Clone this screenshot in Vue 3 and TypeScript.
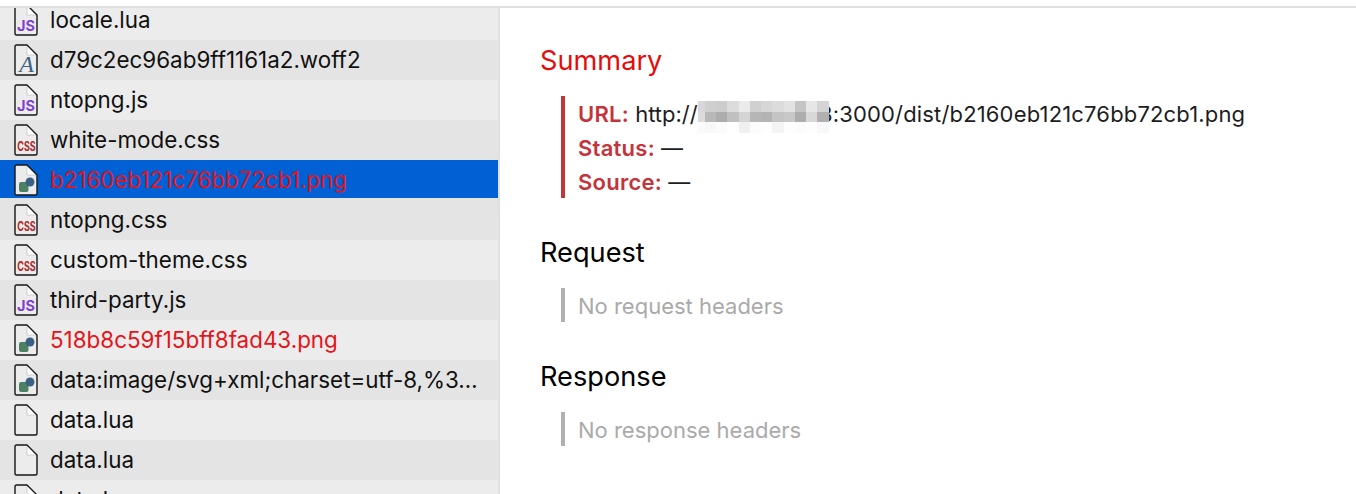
<script setup lang="ts">
type Kind = 'js' | 'font' | 'css' | 'img' | 'blank'
interface Row { name: string; kind: Kind; failed?: boolean; selected?: boolean }

const rows: Row[] = [
  { name: 'locale.lua', kind: 'js' },
  { name: 'd79c2ec96ab9ff1161a2.woff2', kind: 'font' },
  { name: 'ntopng.js', kind: 'js' },
  { name: 'white-mode.css', kind: 'css' },
  { name: 'b2160eb121c76bb72cb1.png', kind: 'img', failed: true, selected: true },
  { name: 'ntopng.css', kind: 'css' },
  { name: 'custom-theme.css', kind: 'css' },
  { name: 'third-party.js', kind: 'js' },
  { name: '518b8c59f15bff8fad43.png', kind: 'img', failed: true },
  { name: 'data:image/svg+xml;charset=utf-8,%3…', kind: 'img' },
  { name: 'data.lua', kind: 'blank' },
  { name: 'data.lua', kind: 'blank' },
  { name: 'data.lua', kind: 'blank' },
]

const mosaic: string[][] = [
  ['#d8d8d8', '#cfcfcf', '#cccccc', '#dcdcdc', '#ebebeb', '#d0d0d0', '#d6d6d6', '#dcdcdc', '#e2e2e2', '#c4c4c4', '#e6e6e6', '#d4d4d4'],
  ['#dcdcdc', '#b8b8b8', '#adadad', '#c0c0c0', '#d4d4d4', '#b6b6b6', '#b4b4b4', '#c4c4c4', '#c8c8c8', '#adadad', '#d8d8d8', '#b0b0b0'],
  ['#fafafa', '#f8f8f8', '#fbfbfb', '#ffffff', '#f0f0f0', '#fbfbfb', '#fdfdfd', '#f4f4f4', '#fdfdfd', '#fbfbfb', '#fdfdfd', '#f8f8f8'],
]
</script>

<template>
  <div class="app">
    <div class="topbar"></div>
    <div class="main">
      <aside class="side">
        <ul class="list">
          <li
            v-for="(r, i) in rows"
            :key="i"
            class="row"
            :class="{ alt: i % 2 === 1, selected: r.selected }"
          >
            <svg class="icon" viewBox="0 0 24 32" width="24" height="32" aria-hidden="true">
              <path d="M13 1 H2.5 Q1 1 1 2.5 V29.5 Q1 31 2.5 31 H21.5 Q23 31 23 29.5 V11 Z" fill="#ececec" />
              <path d="M13 1 L23 11 H13 Z" fill="#ffffff" />
              <path d="M13 1 V11 H23" fill="none" stroke="#9a9a9a" stroke-width="0.4" />
              <path d="M13 1 H2.5 Q1 1 1 2.5 V29.5 Q1 31 2.5 31 H21.5 Q23 31 23 29.5 V11 Z" fill="none" stroke="#161616" stroke-width="1.4" stroke-linejoin="round" />
              <text v-if="r.kind === 'js'" class="g g-js" x="12" y="26.6" text-anchor="middle">JS</text>
              <text v-if="r.kind === 'css'" class="g g-css" transform="translate(12.5 26.7) scale(0.72 1)" text-anchor="middle">CSS</text>
              <text v-if="r.kind === 'font'" class="g g-font" x="12.5" y="27.7" text-anchor="middle">A</text>
              <template v-if="r.kind === 'img'">
                <rect x="5" y="18" width="9.5" height="10" rx="2" fill="#4d8163" />
                <circle cx="16" cy="18" r="4.5" fill="#3c5f84" />
              </template>
            </svg>
            <span class="name" :class="{ failed: r.failed }">{{ r.name }}</span>
          </li>
        </ul>
      </aside>

      <section class="detail">
        <h2 class="heading error">Summary</h2>
        <div class="block error-block">
          <div class="line">
            <b>URL:</b> http://<span class="mask">8<span class="mosaic">
                <template v-for="(col, y) in mosaic" :key="y">
                  <i v-for="(c, x) in col" :key="x" :style="{ background: c }"></i>
                </template>
              </span></span><span class="tail">:3000/dist/b2160eb121c76bb72cb1.png</span>
          </div>
          <div class="line"><b>Status:</b> —</div>
          <div class="line"><b>Source:</b> —</div>
        </div>

        <h2 class="heading">Request</h2>
        <div class="block"><div class="line muted">No request headers</div></div>

        <h2 class="heading">Response</h2>
        <div class="block"><div class="line muted">No response headers</div></div>
      </section>
    </div>
  </div>
</template>

<style>
html, body { margin: 0; background: #fff; overflow: hidden; }
</style>

<style scoped>
.app {
  width: 1356px;
  height: 494px;
  display: flex;
  flex-direction: column;
  overflow: hidden;
  background: #fff;
  font-family: Inter, "Liberation Sans", sans-serif;
  color: #1d1d1f;
}
.topbar {
  height: 6px;
  flex: none;
  border-bottom: 2px solid #e0e0e0;
  position: relative;
  z-index: 1;
  background: #fff;
}
.main { flex: 1; display: flex; min-height: 0; }
.side {
  width: 498px;
  flex: none;
  border-right: 2px solid #e0e0e0;
  overflow: hidden;
}
.list { list-style: none; margin: -8px 0 0; padding: 0; }
.row {
  height: 40px;
  display: flex;
  align-items: center;
  gap: 12px;
  padding-left: 14px;
  background: #ececec;
}
.row.alt { background: #e4e4e4; }
.row.selected {
  background: #0060d4;
  box-shadow: inset 0 -2px 0 #e4e4e4;
}
.icon { flex: none; display: block; overflow: visible; }
.name {
  font-size: 22.4px;
  color: #111;
  white-space: nowrap;
  padding-bottom: 1px;
}
.name.failed { color: #e5131a; }
.g { font-family: Inter, "Liberation Sans", sans-serif; font-weight: 700; }
.g-js { fill: #7d3fd6; font-size: 14.5px; }
.g-css { fill: #b3262a; font-size: 12.5px; }
.g-font { fill: #3f6284; font-size: 24px; font-family: "Liberation Serif", serif; font-style: italic; font-weight: 400; }

.detail { flex: 1; padding: 35px 0 0 40px; min-width: 0; }
.heading {
  margin: 0;
  padding-top: 2px;
  font-size: 27.2px;
  font-weight: 400;
  line-height: 32px;
  color: #000;
}
.heading.error { color: #e60b0b; }
.block {
  margin: 19px 0 37px 21px;
  padding-left: 13px;
  border-left: 4px solid #b0b0b0;
}
.block.error-block { border-left-color: #c4343a; }
.line {
  font-size: 22px;
  line-height: 32px;
  padding-top: 2px;
  white-space: nowrap;
}
.line b { color: #c4343a; font-weight: 600; letter-spacing: 0.25px; }
.muted { color: #aaa; }
.mask {
  position: relative;
  display: inline-block;
  width: 135px;
  text-align: right;
}
.tail { letter-spacing: 0.16px; }
.mosaic {
  position: absolute;
  left: 0;
  top: 3px;
  width: 131px;
  height: 32px;
  display: grid;
  grid-template-columns: 7px repeat(11, 1fr);
  grid-template-rows: repeat(3, 1fr);
}
.mosaic i { display: block; }
</style>
